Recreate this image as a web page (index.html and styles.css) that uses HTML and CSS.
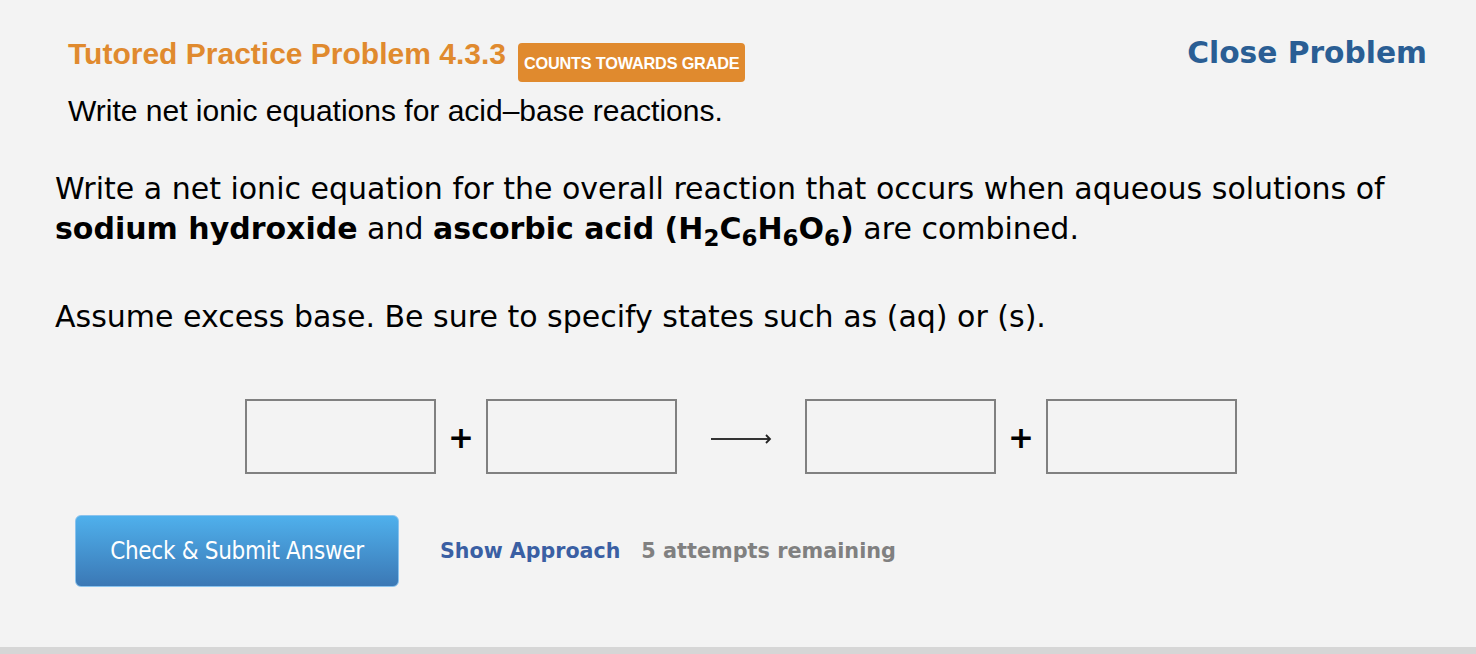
FILE: index.html
```html
<!DOCTYPE html>
<html lang="en">

<head>
    <meta charset="UTF-8">
    <meta name="viewport" content="width=device-width, initial-scale=1.0">
    <title>Tutored Practice Problem 4.3.3</title>
    <link rel="stylesheet" href="styles.css">
</head>

<body>
    <div class="page">
        <div class="header">
            <div class="header-left">
                <div class="title-row">
                    <h1 class="title">Tutored Practice Problem 4.3.3</h1>
                    <span class="badge">COUNTS TOWARDS GRADE</span>
                </div>
                <p class="subtitle">Write net ionic equations for acid&ndash;base reactions.</p>
            </div>
            <a class="close-link" href="#">Close Problem</a>
        </div>

        <div class="question">
            <p class="q-text">Write a net ionic equation for the overall reaction that occurs when aqueous solutions of
                <b>sodium hydroxide</b> and <b>ascorbic acid (H<sub>2</sub>C<sub>6</sub>H<sub>6</sub>O<sub>6</sub>)</b> are combined.</p>
            <p class="q-text">Assume excess base. Be sure to specify states such as (aq) or (s).</p>
        </div>

        <div class="equation">
            <input type="text" class="eq-box">
            <span class="plus">+</span>
            <input type="text" class="eq-box">
            <span class="arrow">
                <svg width="62" height="12" viewBox="0 0 62 12">
                    <line x1="1" y1="6" x2="59" y2="6" stroke="#333" stroke-width="2"/>
                    <path d="M56 2 L60 6 L56 10" fill="none" stroke="#222" stroke-width="1.8"/>
                </svg>
            </span>
            <input type="text" class="eq-box">
            <span class="plus">+</span>
            <input type="text" class="eq-box">
        </div>

        <div class="actions">
            <button type="button" class="submit-btn">Check &amp; Submit Answer</button>
            <a class="approach-link" href="#">Show Approach</a>
            <span class="attempts">5 attempts remaining</span>
        </div>
    </div>
    <div class="bottom-bar"></div>
</body>

</html>
```

FILE: styles.css
```css
body {
    margin: 0;
    padding: 0;
    background-color: #f3f3f3;
    font-family: "DejaVu Sans", Verdana, sans-serif;
    color: #000000;
}

.page {
    height: 647px;
    box-sizing: border-box;
    padding: 36px 49px 0 55px;
}

.header {
    display: flex;
    justify-content: space-between;
    align-items: flex-start;
    padding-left: 13px;
}

.title-row {
    display: flex;
    align-items: flex-start;
    gap: 12px;
}

.title {
    margin: 0;
    font-family: "Liberation Sans", Arial, sans-serif;
    font-size: 30px;
    font-weight: bold;
    line-height: 36px;
    color: #e08a2e;
}

.badge {
    margin-top: 7px;
    padding: 0 6px;
    height: 39px;
    line-height: 41px;
    background-color: #e08a2e;
    border-radius: 4px;
    color: #ffffff;
    font-family: "Liberation Sans", Arial, sans-serif;
    font-size: 16.3px;
    font-weight: bold;
    letter-spacing: -0.2px;
}

.subtitle {
    margin: 12px 0 0 0;
    font-family: "Liberation Sans", Arial, sans-serif;
    font-size: 30px;
    line-height: 34px;
}

.close-link {
    font-size: 29.7px;
    font-weight: bold;
    line-height: 34px;
    color: #2a5e94;
    text-decoration: none;
}

.question {
    margin-top: 41px;
}

.q-text {
    margin: 0 0 48px 0;
    font-size: 30px;
    line-height: 40px;
}

.q-text sub {
    font-size: 23px;
    line-height: 0;
    vertical-align: -7px;
}

.equation {
    display: flex;
    align-items: center;
    margin-top: 62px;
    padding-left: 190px;
}

.eq-box {
    width: 191px;
    height: 75px;
    box-sizing: border-box;
    margin: 0;
    border: 2px solid #808080;
    background-color: #f3f3f3;
    font-size: 22px;
}

.plus {
    width: 50px;
    text-align: center;
    font-size: 31px;
    font-weight: bold;
    line-height: 30px;
}

.arrow {
    display: flex;
    justify-content: center;
    width: 128px;
    padding-top: 4px;
}

.actions {
    display: flex;
    align-items: center;
    margin-top: 41px;
    padding-left: 20px;
}

.submit-btn {
    width: 324px;
    height: 72px;
    border: 1px solid #8ac3ee;
    border-radius: 6px;
    background: linear-gradient(to bottom, #4fb0ec, #3b78b5);
    color: #ffffff;
    font-family: "DejaVu Sans Condensed", "DejaVu Sans", sans-serif;
    font-size: 24px;
    letter-spacing: -0.3px;
    cursor: pointer;
}

.approach-link {
    margin-left: 41px;
    font-size: 20.6px;
    font-weight: bold;
    color: #3a5fa3;
    text-decoration: none;
}

.attempts {
    margin-left: 21px;
    font-size: 20.8px;
    font-weight: bold;
    color: #808080;
}

.bottom-bar {
    height: 7px;
    background-color: #d6d6d6;
}
```
